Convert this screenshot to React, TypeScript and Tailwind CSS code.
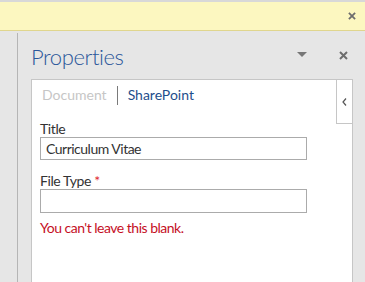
import React from 'react';

const XIcon = ({ size = 9 }: { size?: number }) => (
  <svg width={size} height={size} viewBox="0 0 9 9" className="block">
    <path d="M1 1 L8 8 M8 1 L1 8" stroke="#6d6d6d" strokeWidth="2" />
  </svg>
);

const App = () => {
  return (
    <div
      className="w-[365px] h-[282px] overflow-hidden bg-[#e6e6e6] flex flex-col"
      style={{ fontFamily: 'Lato, "Noto Sans", sans-serif' }}
    >
      {/* message bar */}
      <div className="h-[2px] bg-[#d8d8d8]" />
      <div className="h-[29px] bg-[#fcf7c0] border-b border-[#e0d68e] flex items-center justify-end pr-[9px]">
        <XIcon size={8} />
      </div>

      <div className="flex-1 flex">
        <div className="ml-[17px] mt-[2px] w-px bg-[#b5b5b5]" />
        <div className="flex-1 flex flex-col pl-[13px] pr-[12px]">
          {/* header */}
          <div className="h-[48px] flex items-center">
            <div className="flex-1 text-[22px] font-light tracking-[-0.4px] text-[#2b579a] leading-none pt-[3px]">
              Properties
            </div>
            <div className="w-0 h-0 border-l-[5px] border-r-[5px] border-t-[5px] border-l-transparent border-r-transparent border-t-[#777] mr-[32px] mb-[2px]" />
            <div className="mr-[5px] mt-[1px]">
              <XIcon size={9} />
            </div>
          </div>

          {/* pane */}
          <div className="flex-1 flex bg-white border-t border-l border-r border-[#c6c6c6]">
            <div className="flex-1 flex flex-col pl-[8px] text-[14px] leading-[20px]">
              <div className="flex items-center mt-[5px] pl-[2px] h-[20px]">
                <span className="text-[#c6c6c6]">Document</span>
                <span className="w-px h-[19px] bg-[#7a7a7a] mx-[10px]" />
                <span className="text-[#1e4e8c]">SharePoint</span>
              </div>

              <div className="mt-[16px] leading-[16px] tracking-[-0.4px] text-[#333]">Title</div>
              <div className="w-[267px] h-[23px] border border-[#ababab] flex items-center px-[5px] tracking-[-0.5px] text-[#333]">
                Curriculum Vitae
              </div>

              <div className="mt-[13px] leading-[16px] tracking-[-0.4px] text-[#333]">
                File Type <span className="text-[#e0282e]">*</span>
              </div>
              <div className="w-[267px] h-[24px] border border-[#ababab]" />

              <div className="mt-[5px] tracking-[-0.5px] text-[#c50f1f]">You can't leave this blank.</div>
            </div>
            <div className="w-[16px] flex flex-col">
              <div className="h-[44px] border-l border-b border-[#c6c6c6] flex items-center justify-center">
                <svg width="5" height="8" viewBox="0 0 5 8" className="block">
                  <path d="M4 0.5 L1 4 L4 7.5" stroke="#555" strokeWidth="1.2" fill="none" />
                </svg>
              </div>
            </div>
          </div>
        </div>
      </div>
    </div>
  );
};

export default App;
